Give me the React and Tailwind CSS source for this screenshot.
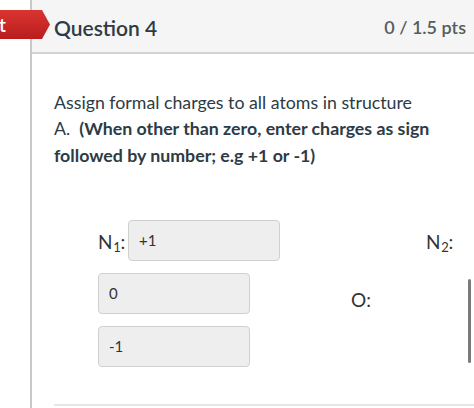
import React from "react";

export default function App() {
  return (
    <div className="relative w-[474px] h-[408px] overflow-hidden bg-white flex" style={{ fontFamily: "Lato, 'Open Sans', sans-serif" }}>
      <div className="w-[32px] shrink-0 border-r-2 border-[#c8c8c8]" />
      <div className="absolute left-0 top-[10px] h-[29px] w-[50px] bg-gradient-to-b from-[#da3431] to-[#b81d1d] [clip-path:polygon(0_0,42px_0,50px_50%,42px_100%,0_100%)] flex items-center">
        <span className="text-white text-[19px] font-semibold leading-none -ml-[1px]">t</span>
      </div>
      <div className="flex-1 flex flex-col">
        <div className="h-[54px] shrink-0 bg-[#f5f5f5] border-b-2 border-[#cfd3d6] flex items-center justify-between pl-[22px] pr-[8px]">
          <span className="text-[21px] font-semibold text-[#2d3b45] leading-none mt-[2px]">Question 4</span>
          <span className="text-[18px] font-semibold text-[#555c60] leading-none mt-[2px]">0 / 1.5 pts</span>
        </div>
        <div className="pl-[22px] pt-[35px] text-[17.75px] leading-[26.3px] text-[#2d3b45]">
          <p>
            Assign formal charges to all atoms in structure
            <br />
            A.&nbsp; <b className="font-bold">(When other than zero, enter charges as sign</b>
            <br />
            <b className="font-bold">followed by number; e.g +1 or -1)</b>
          </p>
        </div>
        <div className="pl-[66px] pt-[52px] text-[#333]">
          <div className="flex items-center h-[41px]">
            <span className="text-[19px] w-[30px] mt-[4px] whitespace-nowrap tracking-[-0.3px]">
              N<sub className="text-[13px] ml-[1px]">1</sub>:
            </span>
            <div className="w-[152px] h-[41px] bg-[#eeeeee] border border-[#d0d0d0] rounded-[4px] pl-[10px] flex items-center text-[15px] text-[#333]">+1</div>
            <span className="ml-[146px] text-[19px] mt-[4px] whitespace-nowrap tracking-[-0.3px]">
              N<sub className="text-[13px] ml-[1px]">2</sub>:
            </span>
          </div>
          <div className="flex mt-[12px]">
            <div className="flex flex-col gap-[12px]">
              <div className="w-[152px] h-[41px] bg-[#eeeeee] border border-[#d0d0d0] rounded-[4px] pl-[10px] flex items-center text-[15px] text-[#333]">0</div>
              <div className="w-[152px] h-[41px] bg-[#eeeeee] border border-[#d0d0d0] rounded-[4px] pl-[10px] flex items-center text-[15px] text-[#333]">-1</div>
            </div>
            <span className="ml-[101px] mt-[14px] text-[19px] leading-[26px] h-[26px]">O:</span>
            <div className="ml-auto mr-[3px] mt-[6px] w-[3px] h-[84px] bg-[#7a7a7a] rounded-full" />
          </div>
        </div>
        <div className="mt-auto mb-[2px] ml-[22px] border-t-2 border-[#e6e6e6]" />
      </div>
    </div>
  );
}
